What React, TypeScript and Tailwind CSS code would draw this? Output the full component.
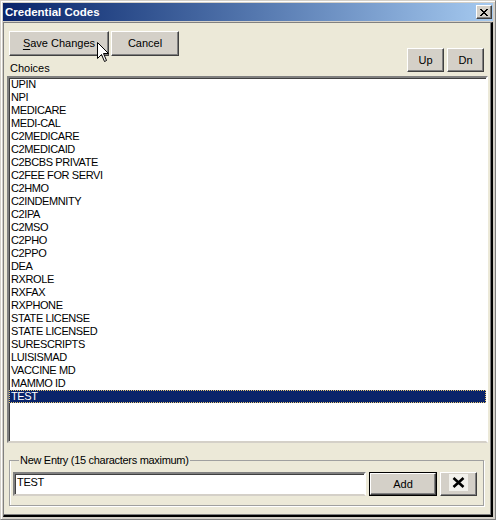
import React from 'react'

const items = [
  'UPIN',
  'NPI',
  'MEDICARE',
  'MEDI-CAL',
  'C2MEDICARE',
  'C2MEDICAID',
  'C2BCBS PRIVATE',
  'C2FEE FOR SERVI',
  'C2HMO',
  'C2INDEMNITY',
  'C2IPA',
  'C2MSO',
  'C2PHO',
  'C2PPO',
  'DEA',
  'RXROLE',
  'RXFAX',
  'RXPHONE',
  'STATE LICENSE',
  'STATE LICENSED',
  'SURESCRIPTS',
  'LUISISMAD',
  'VACCINE MD',
  'MAMMO ID',
  'TEST',
]

const raised =
  'bg-[#d4d0c8] border border-t-white border-l-white border-r-[#404040] border-b-[#404040] shadow-[inset_-1px_-1px_0_#808080] flex items-center justify-center text-black'

const App = () => {
  const selected = 'TEST'

  return (
    <div className="relative w-[496px] h-[520px] flex flex-col bg-[#d4d0c8] border border-t-[#d4d0c8] border-l-[#d4d0c8] border-r-[#808080] border-b-[#808080] font-['Liberation_Sans',Arial,sans-serif] text-[11px] leading-[13px] text-black select-none">
      <div className="flex-1 flex flex-col border-l border-t border-l-white border-t-white pl-[1px] pt-[1px] pr-[2px] pb-[2px]">
        {/* title bar */}
        <div className="h-[18px] flex items-center justify-between pl-[2px] pr-[1px] bg-gradient-to-r from-[#0a246a] to-[#a6caf0]">
          <span className="text-white font-bold text-[11.5px]">Credential Codes</span>
          <button className={`${raised} w-[16px] h-[14px] p-0`}>
            <svg width="8" height="7" viewBox="0 0 8 7" shapeRendering="crispEdges">
              <path d="M0 0h2v1h-2zM6 0h2v1h-2zM1 1h2v1h-2zM5 1h2v1h-2zM2 2h4v1h-4zM3 3h2v1h-2zM2 4h4v1h-4zM1 5h2v1h-2zM5 5h2v1h-2zM0 6h2v1h-2zM6 6h2v1h-2z" fill="#000" />
            </svg>
          </button>
        </div>

        {/* client area */}
        <div className="mt-[1px] flex-1 flex flex-col bg-[#ece9d8] border-l border-t border-l-[#808080] border-t-[#808080] border-r-2 border-b-2 border-r-black border-b-black shadow-[inset_-1px_-1px_0_#808080]">
          <div className="flex justify-between pl-[5px] pr-[7px]">
            <div className="pt-[8px] flex flex-col">
              <div className="flex gap-[2px]">
                <button className={`${raised} w-[100px] h-[25px]`}>
                  <span>
                    <span className="underline underline-offset-2">S</span>ave Changes
                  </span>
                </button>
                <button className={`${raised} w-[68px] h-[25px]`}>Cancel</button>
              </div>
              <div className="mt-[6px] h-[13px] pl-[1px]">Choices</div>
            </div>
            <div className="pt-[25px] flex gap-[3px]">
              <button className={`${raised} w-[37px] h-[24px]`}>Up</button>
              <button className={`${raised} w-[37px] h-[24px]`}>Dn</button>
            </div>
          </div>

          {/* list box */}
          <div className="mt-[1px] mx-[3px] h-[367px] bg-white border-2 border-t-[#808080] border-l-[#808080] border-r-white border-b-[#d4d0c8] shadow-[inset_1px_1px_0_#404040]">
            <div className="flex flex-col tracking-[-0.4px]">
              {items.map(item =>
                item === selected ? (
                  <div
                    key={item}
                    className="h-[13px] leading-[11px] pl-[1px] bg-[#0a246a] text-white border border-dotted border-[#e8c870]"
                  >
                    {item}
                  </div>
                ) : (
                  <div key={item} className="h-[13px] pl-[2px]">
                    {item}
                  </div>
                ),
              )}
            </div>
          </div>

          {/* new entry group */}
          <fieldset className="mt-[11px] ml-[5px] mr-[7px] border border-[#a0a0a0] shadow-[inset_1px_0_0_white,1px_1px_0_white] pl-[3px] pb-[9px]">
            <legend className="ml-[6px] px-[1px] h-[13px] tracking-[-0.3px]">New Entry (15 characters maximum)</legend>
            <div className="mt-[5px] flex gap-[3px]">
              <div className="w-[353px] h-[24px] bg-white border-2 border-t-[#808080] border-l-[#808080] border-r-white border-b-[#d4d0c8] shadow-[inset_1px_1px_0_#404040] pl-[2px] pt-[2px] tracking-[-0.3px]">
                TEST
              </div>
              <div className="w-[68px] h-[24px] border border-black flex">
                <button className={`${raised} flex-1`}>Add</button>
              </div>
              <button className={`${raised} w-[37px] h-[24px]`}>
                <svg width="19" height="17" viewBox="0 0 19 17" className="-mt-[3px] -ml-[1px]">
                  <rect x="0" y="0" width="19" height="17" fill="#f2f1ec" />
                  <path d="M4.5 4L14.5 13M14.5 4L4.5 13" stroke="#000" strokeWidth="2.6" />
                </svg>
              </button>
            </div>
          </fieldset>
        </div>
      </div>

      {/* mouse pointer */}
      <svg
        className="absolute left-[96px] top-[41px] pointer-events-none"
        width="13"
        height="21"
        viewBox="0 0 13 21"
      >
        <path
          d="M0.5 0.5 L0.5 16.5 L4.5 12.5 L7.5 19.5 L9.5 18.5 L6.5 11.5 L11.5 11.5 Z"
          fill="#fff"
          stroke="#000"
          strokeWidth="1"
        />
      </svg>
    </div>
  )
}

export default App
